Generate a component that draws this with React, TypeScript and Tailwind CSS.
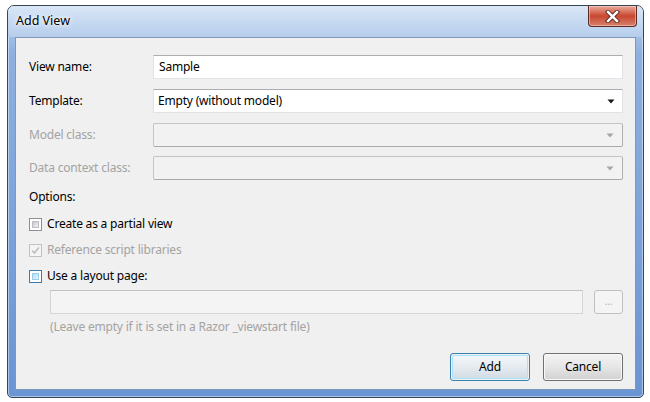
import React from "react";

const Arrow = ({ disabled }: { disabled?: boolean }) => (
  <svg width="8" height="5" viewBox="0 0 8 5" className="shrink-0">
    <path d="M0.5 0.5 L7.5 0.5 L4 4.5 Z" fill={disabled ? "#a6a6a6" : "#1a1a1a"} />
  </svg>
);

const TextBox = ({ value, className = "" }: { value?: string; className?: string }) => (
  <div
    className={
      "h-[24px] flex items-center pl-[5px] bg-white border border-[#dfe3e8] border-t-[#abadb3] " + className
    }
  >
    {value}
  </div>
);

const Combo = ({ value, disabled }: { value?: string; disabled?: boolean }) => (
  <div
    className={
      disabled
        ? "flex-1 h-[24px] flex items-center justify-between pl-[5px] pr-[8px] bg-[#f2f2f2] border border-[#c4c4c4] border-b-[#a9a9a9] border-r-[#b0b0b0] rounded-[2px]"
        : "flex-1 h-[24px] flex items-center justify-between pl-[4px] pr-[7px] bg-white border border-[#dfe3e8] border-t-[#abadb3]"
    }
  >
    <span>{value}</span>
    <Arrow disabled={disabled} />
  </div>
);

const Check = ({ kind }: { kind: "normal" | "disabledChecked" | "hover" }) => {
  if (kind === "disabledChecked") {
    return (
      <div className="w-[13px] h-[13px] border border-[#c2c2c2] bg-[#f4f4f4] flex items-center justify-center shrink-0">
        <svg width="9" height="9" viewBox="0 0 9 9">
          <path d="M1.2 4.6 L3.5 7 L7.8 1.6" stroke="#bdbdbd" strokeWidth="1.6" fill="none" />
        </svg>
      </div>
    );
  }
  if (kind === "hover") {
    return (
      <div className="w-[13px] h-[13px] border border-[#3d7bad] bg-white p-[2px] shrink-0">
        <div className="w-full h-full bg-gradient-to-br from-[#b1dbf6] to-[#e9f7fe] border border-[#9ccbeb]" />
      </div>
    );
  }
  return (
    <div className="w-[13px] h-[13px] border border-[#8e8f8f] bg-white p-[2px] shrink-0">
      <div className="w-full h-full bg-gradient-to-br from-[#c6c9ce] to-[#f2f2f3] border border-[#b9bcc0]" />
    </div>
  );
};

export default function App() {
  return (
    <div className="w-[650px] h-[402px] bg-white pt-[5px] pl-[7px] font-['Noto_Sans','Open_Sans',sans-serif] text-[12px] leading-[16px] tracking-[-0.2px] text-black">
      <div className="w-[637px] h-[393px] rounded-t-[7px] rounded-b-[5px] border border-[#364656] bg-gradient-to-b from-[#c3d7f0] via-[#8eb0e0] via-[12%] to-[#6a95d3] flex flex-col shadow-[inset_0_0_0_1px_rgba(255,255,255,0.45)]">
        {/* Title bar */}
        <div className="h-[31px] flex items-start justify-between bg-gradient-to-b from-[#d9e6f6] to-[#b6cdec] rounded-t-[6px]">
          <div className="pl-[8px] pt-[7px] text-[12.5px] tracking-normal text-black [text-shadow:0_0_6px_#ffffff,0_0_3px_#ffffff]">
            Add View
          </div>
          <div className="mr-[6px] w-[49px] h-[21px] rounded-b-[4px] border border-t-0 border-[#5b2a22] bg-gradient-to-b from-[#e7aa9c] via-[#c9452e] via-[50%] to-[#d6806c] shadow-[inset_0_0_0_1px_rgba(255,220,210,0.5)] flex items-center justify-center">
            <svg width="15" height="13" viewBox="0 0 15 13">
              <path d="M3 2 L12 11 M12 2 L3 11" stroke="#4a1d16" strokeWidth="4.2" strokeLinecap="square" />
              <path d="M3 2 L12 11 M12 2 L3 11" stroke="#ffffff" strokeWidth="2.5" strokeLinecap="square" />
            </svg>
          </div>
        </div>

        {/* Client area */}
        <div className="mx-[7px] mb-[7px] flex-1 border border-[#7f97ba] bg-[#f0f0f0] pl-[13px] pr-[12px] pt-[17px] flex flex-col">
          <div className="flex items-center h-[24px]">
            <div className="w-[124px]">View name:</div>
            <TextBox value="Sample" className="flex-1" />
          </div>
          <div className="flex items-center h-[24px] mt-[10px]">
            <div className="w-[124px]">Template:</div>
            <Combo value="Empty (without model)" />
          </div>
          <div className="flex items-center h-[24px] mt-[10px] text-[#a3a3a3]">
            <div className="w-[124px]">Model class:</div>
            <Combo disabled />
          </div>
          <div className="flex items-center h-[24px] mt-[9px] text-[#a3a3a3]">
            <div className="w-[124px]">Data context class:</div>
            <Combo disabled />
          </div>

          <div className="mt-[9px] h-[16px]">Options:</div>

          <div className="mt-[11px] h-[16px] flex items-center gap-[5px]">
            <Check kind="normal" />
            <span>Create as a partial view</span>
          </div>
          <div className="mt-[10px] h-[16px] flex items-center gap-[5px] text-[#a3a3a3]">
            <Check kind="disabledChecked" />
            <span>Reference script libraries</span>
          </div>
          <div className="mt-[10px] h-[16px] flex items-center gap-[5px]">
            <Check kind="hover" />
            <span>Use a layout page:</span>
          </div>

          <div className="mt-[6px] pl-[21px] flex items-center gap-[11px]">
            <div className="flex-1 h-[24px] bg-[#f4f4f4] border border-[#d5d5d5] border-t-[#c2c2c2]" />
            <div className="w-[29px] h-[24px] rounded-[3px] border border-[#c0c0c0] bg-[#f4f4f4] flex items-center justify-center text-[#b0b0b0] text-[10px] leading-[10px] pb-[3px]">
              ...
            </div>
          </div>
          <div className="mt-[5px] pl-[21px] h-[16px] text-[#a3a3a3]">
            (Leave empty if it is set in a Razor _viewstart file)
          </div>

          <div className="mt-[18px] flex justify-end gap-[13px]">
            <div className="w-[80px] h-[28px] rounded-[3px] border border-[#3c7fb1] p-[1px] bg-[#f0f0f0]">
              <div className="w-full h-full rounded-[2px] border border-[#a8e4f8] bg-gradient-to-b from-[#f3f6f9] via-[#e6ebf0] via-[50%] to-[#d3dce4] flex items-center justify-center">
                Add
              </div>
            </div>
            <div className="w-[80px] h-[28px] rounded-[3px] border border-[#707070] p-[1px] bg-[#f8f8f8]">
              <div className="w-full h-full rounded-[2px] bg-gradient-to-b from-[#f2f2f2] via-[#e6e6e6] via-[50%] to-[#d2d2d2] flex items-center justify-center">
                Cancel
              </div>
            </div>
          </div>
        </div>
      </div>
    </div>
  );
}
